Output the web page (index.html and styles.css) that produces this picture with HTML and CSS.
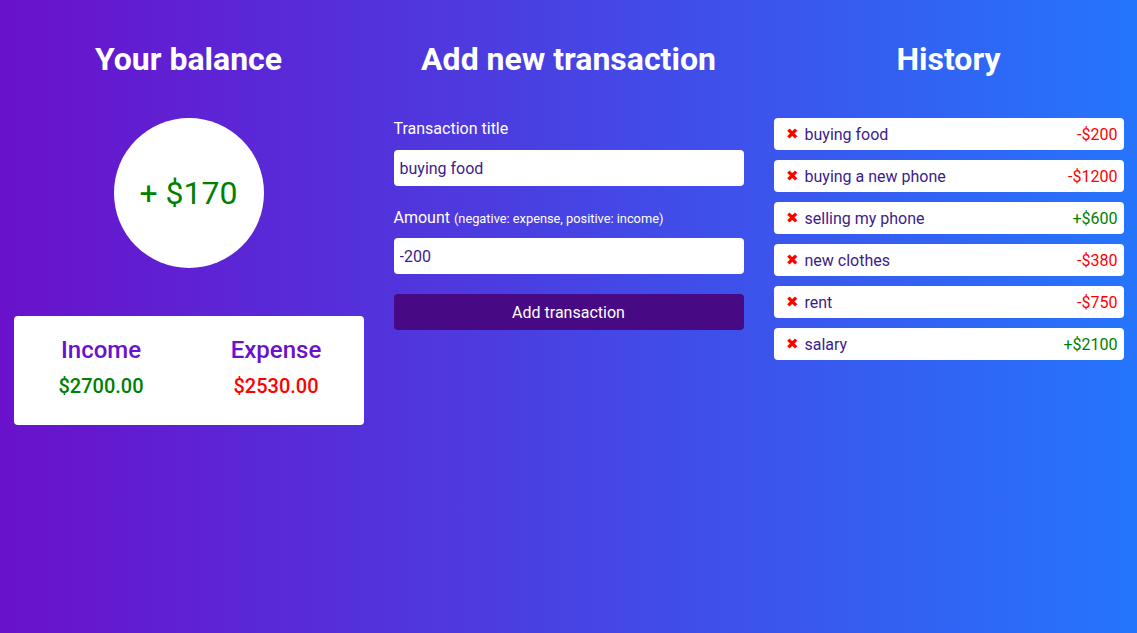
FILE: index.html
```html
<!DOCTYPE html>
<html>
<head>
  <meta charset="UTF-8" />
  <title>Expense tracker</title>
  <link rel="stylesheet" href="styles.css">
</head>
<body>
<div class="container">
  <!-- balance -->
  <div class="column">
    <h1 class="title">Your balance</h1>
    <div class="balance">
      <span class="positive">+ $170</span>
    </div>
    <div class="summary">
      <div class="summary-item">
        <h2>Income</h2>
        <span class="positive">$2700.00</span>
      </div>
      <div class="summary-item">
        <h2>Expense</h2>
        <span class="negative">$2530.00</span>
      </div>
    </div>
  </div>

  <!-- form -->
  <div class="column">
    <h1 class="title">Add new transaction</h1>
    <form class="form">
      <label class="label" for="title">Transaction title</label>
      <input class="input" id="title" type="text" value="buying food">
      <label class="label" for="amount">Amount <small>(negative: expense, positive: income)</small></label>
      <input class="input" id="amount" type="text" value="-200">
      <button class="button" type="button">Add transaction</button>
    </form>
  </div>

  <!-- history -->
  <div class="column">
    <h1 class="title">History</h1>
    <ul class="history">
      <li class="history-item"><span class="remove">&#10006;</span><span class="name">buying food</span><span class="negative">-$200</span></li>
      <li class="history-item"><span class="remove">&#10006;</span><span class="name">buying a new phone</span><span class="negative">-$1200</span></li>
      <li class="history-item"><span class="remove">&#10006;</span><span class="name">selling my phone</span><span class="positive">+$600</span></li>
      <li class="history-item"><span class="remove">&#10006;</span><span class="name">new clothes</span><span class="negative">-$380</span></li>
      <li class="history-item"><span class="remove">&#10006;</span><span class="name">rent</span><span class="negative">-$750</span></li>
      <li class="history-item"><span class="remove">&#10006;</span><span class="name">salary</span><span class="positive">+$2100</span></li>
    </ul>
  </div>
</div>
</body>
</html>
```

FILE: styles.css
```css
* {
  box-sizing: border-box;
}

html, body {
  margin: 0;
  height: 100%;
}

body {
  font-family: Roboto, "Liberation Sans", sans-serif;
  background: linear-gradient(to right, #6a11cb, #2575fc);
  color: #fff;
}

.container {
  display: grid;
  grid-template-columns: repeat(3, 350px);
  gap: 30px;
  justify-content: center;
  padding-top: 38px;
}

.column {
  display: flex;
  flex-direction: column;
}

.title {
  margin: 0 0 38px;
  font-size: 32px;
  font-weight: 700;
  line-height: 42px;
  text-align: center;
}

.positive {
  color: #008000;
}

.negative {
  color: #ff0000;
}

.balance {
  width: 150px;
  height: 150px;
  margin: 0 auto;
  border-radius: 50%;
  background: #fff;
  display: flex;
  align-items: center;
  justify-content: center;
  font-size: 32px;
}

.summary {
  display: flex;
  margin-top: 48px;
  padding: 20px 0 27px;
  background: #fff;
  border-radius: 4px;
}

.summary-item {
  flex: 1;
  text-align: center;
  font-size: 20px;
  font-weight: 500;
}

.summary-item h2 {
  margin: 0 0 10px;
  font-size: 24px;
  font-weight: 500;
  line-height: 28px;
  color: #6a11cb;
}

.form {
  display: flex;
  flex-direction: column;
  margin: 0;
}

.label {
  height: 20px;
  font-size: 16px;
  line-height: 20px;
  margin: 1px 0 11px;
}

.label small {
  font-size: 0.8em;
  line-height: 1;
}

.input {
  height: 36px;
  margin-bottom: 20px;
  padding: 0 6px;
  border: none;
  border-radius: 4px;
  font-family: inherit;
  font-size: 16px;
  color: #3c1c8c;
  outline: none;
}

.input + .label {
  margin: 2px 0 10px;
}

.button {
  height: 36px;
  border: none;
  border-radius: 4px;
  background: #480a84;
  color: #fff;
  font-family: inherit;
  font-size: 16px;
  cursor: pointer;
}

.history {
  list-style: none;
  margin: 0;
  padding: 0;
  display: flex;
  flex-direction: column;
  gap: 10px;
}

.history-item {
  display: flex;
  align-items: center;
  height: 32px;
  padding: 0 6px 0 12px;
  background: #fff;
  border-radius: 4px;
  font-size: 16px;
  color: #3c1c8c;
}

.remove {
  color: #ff0000;
  font-size: 15px;
  margin-right: 6px;
  cursor: pointer;
}

.name {
  flex: 1;
}
```
